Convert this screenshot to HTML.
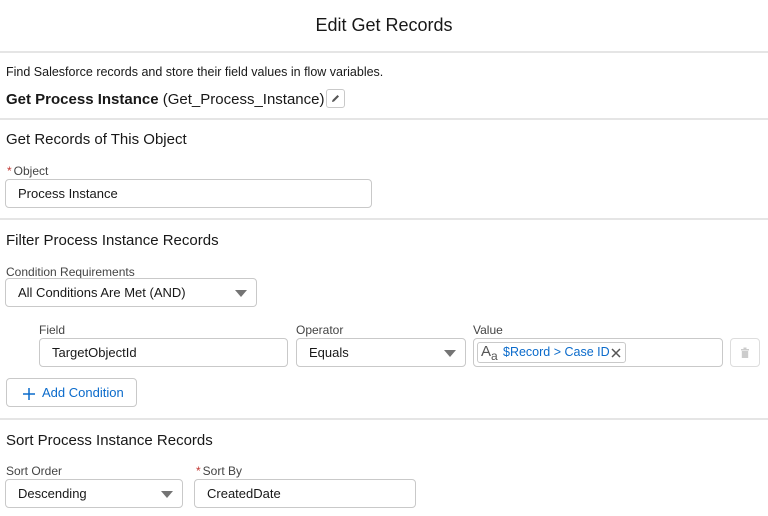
<!DOCTYPE html>
<html><head><style>
*{box-sizing:border-box;margin:0;padding:0}
body{width:768px;height:516px;background:#fff;font-family:"Liberation Sans",sans-serif;color:#181818;position:relative;overflow:hidden}
.a{position:absolute;white-space:nowrap}
.hr{position:absolute;left:0;width:768px;height:2px;background:#e5e5e5}
.h{font-size:15px;color:#181818}
.lbl{font-size:12px;color:#444}
.req{color:#c23934;margin-right:2px}
.in{position:absolute;border:1px solid #c9c9c9;border-radius:4px;height:29px;font-size:13px;padding-left:12px;line-height:27px;background:#fff}
.tri{position:absolute;right:9px;top:11px;width:0;height:0;border-left:6px solid transparent;border-right:6px solid transparent;border-top:7px solid #747474}
</style></head><body>
<div class="a" style="left:0;width:768px;text-align:center;top:15px;font-size:18px;color:#181818">Edit Get Records</div>
<div class="hr" style="top:51px"></div>
<div class="a" style="left:6px;top:65px;font-size:12.5px">Find Salesforce records and store their field values in flow variables.</div>
<div class="a" style="left:6px;top:91px;font-size:15px"><b>Get Process Instance</b> (Get_Process_Instance)</div>
<div class="a" style="left:326px;top:89px;width:19px;height:19px;border:1px solid #c9c9c9;border-radius:3px">
<svg width="17" height="17" viewBox="0 0 17 17"><path d="M5 12 L5.5 10 L10.5 5 L12 6.5 L7 11.5 Z" fill="#555"/></svg></div>
<div class="hr" style="top:118px"></div>
<div class="a h" style="left:6px;top:131px">Get Records of This Object</div>
<div class="a lbl" style="left:7px;top:164px"><span class="req">*</span>Object</div>
<div class="in" style="left:5px;top:179px;width:367px">Process Instance</div>
<div class="hr" style="top:218px"></div>
<div class="a h" style="left:6px;top:232px">Filter Process Instance Records</div>
<div class="a lbl" style="left:6px;top:265px">Condition Requirements</div>
<div class="in" style="left:5px;top:278px;width:252px">All Conditions Are Met (AND)<div class="tri"></div></div>
<div class="a lbl" style="left:39px;top:323px">Field</div>
<div class="in" style="left:39px;top:338px;width:249px">TargetObjectId</div>
<div class="a lbl" style="left:296px;top:323px">Operator</div>
<div class="in" style="left:296px;top:338px;width:170px">Equals<div class="tri"></div></div>
<div class="a lbl" style="left:473px;top:323px">Value</div>
<div class="in" style="left:473px;top:338px;width:250px;padding-left:3px">
<div style="position:absolute;left:3px;top:3px;height:21px;width:149px;border:1px solid #c9c9c9;border-radius:3px;font-size:12.5px;line-height:19px">
<span style="position:absolute;left:3px;top:-1px;font-size:15px;color:#555">A</span><span style="position:absolute;left:13px;top:4px;font-size:12px;color:#555">a</span>
<span style="position:absolute;left:25px;color:#0b6bcb">$Record &gt; Case ID</span>
<svg style="position:absolute;left:133px;top:5px" width="10" height="10" viewBox="0 0 10 10"><path d="M1 1L9 9M9 1L1 9" stroke="#555" stroke-width="1.5"/></svg></div></div>
<div class="a" style="left:730px;top:338px;width:30px;height:29px;border:1px solid #ddd;border-radius:4px">
<svg width="28" height="27" viewBox="0 0 28 27"><rect x="10" y="10" width="8" height="1.5" fill="#ccc"/><rect x="12.5" y="8.5" width="3" height="1.5" fill="#ccc"/><rect x="10.8" y="12" width="6.4" height="7" fill="#ccc"/></svg></div>
<div class="a" style="left:6px;top:378px;width:131px;height:29px;border:1px solid #c9c9c9;border-radius:4px;font-size:13px;color:#0b6bcb;line-height:27px;padding-left:35px">Add Condition
<svg style="position:absolute;left:16px;top:9px" width="12" height="12" viewBox="0 0 12 12"><path d="M6 0V12M0 6H12" stroke="#0b6bcb" stroke-width="1.5"/></svg></div>
<div class="hr" style="top:418px"></div>
<div class="a h" style="left:6px;top:432px">Sort Process Instance Records</div>
<div class="a lbl" style="left:6px;top:464px">Sort Order</div>
<div class="in" style="left:5px;top:479px;width:178px">Descending<div class="tri"></div></div>
<div class="a lbl" style="left:196px;top:464px"><span class="req">*</span>Sort By</div>
<div class="in" style="left:194px;top:479px;width:222px">CreatedDate</div>
</body></html>
